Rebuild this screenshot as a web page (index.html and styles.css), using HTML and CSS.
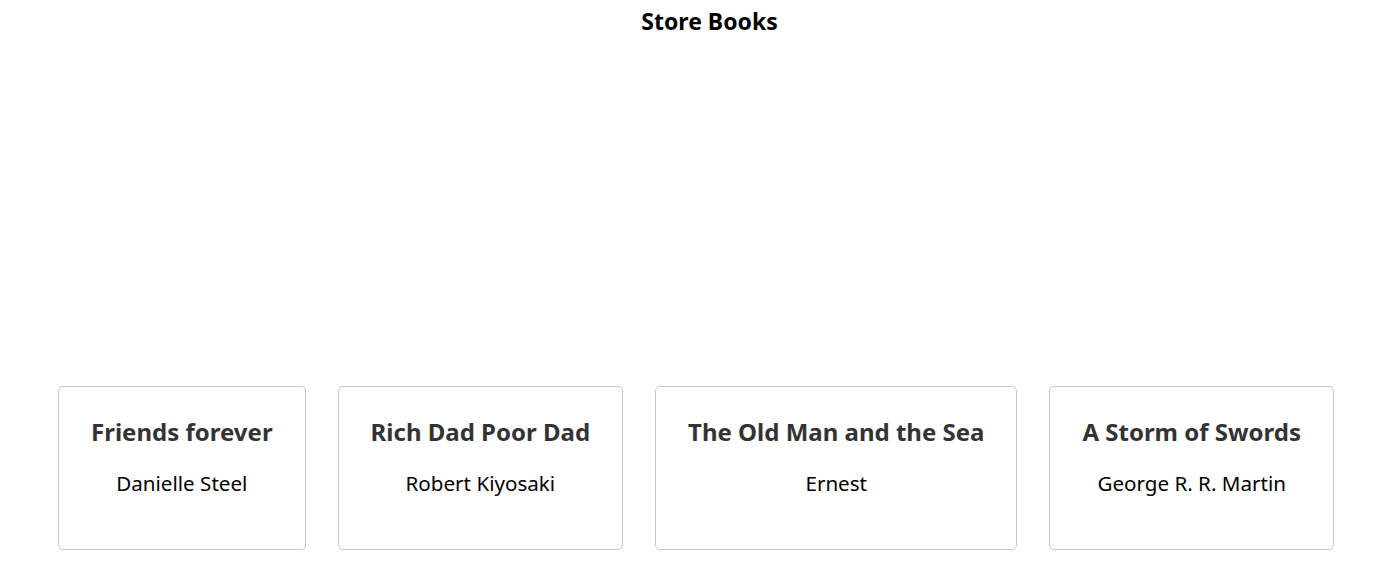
FILE: index.html
```html
<!DOCTYPE html>
<html>
<head>
<meta charset="utf-8">
<link rel="stylesheet" href="styles.css">
</head>
<body>
<h1 class="page-title">Store Books</h1>
<div class="book-list">
  <div class="book-card">
    <h2 class="book-title">Friends forever</h2>
    <p class="book-author">Danielle Steel</p>
  </div>
  <div class="book-card">
    <h2 class="book-title">Rich Dad Poor Dad</h2>
    <p class="book-author">Robert Kiyosaki</p>
  </div>
  <div class="book-card">
    <h2 class="book-title">The Old Man and the Sea</h2>
    <p class="book-author">Ernest</p>
  </div>
  <div class="book-card">
    <h2 class="book-title">A Storm of Swords</h2>
    <p class="book-author">George R. R. Martin</p>
  </div>
</div>
</body>
</html>
```
FILE: styles.css
```css
html, body {
  margin: 0;
  padding: 0;
  background: #fff;
}
body {
  font-family: "Noto Sans", "Open Sans", sans-serif;
}
.page-title {
  margin: 0;
  padding-top: 7px;
  padding-left: 19px;
  text-align: center;
  font-size: 23px;
  line-height: 28px;
  font-weight: 700;
  color: #000;
}
.book-list {
  display: flex;
  align-items: flex-start;
  gap: 32px;
  padding-left: 58px;
  margin-top: 351px;
}
.book-card {
  box-sizing: border-box;
  height: 164px;
  padding: 29px 32px 0;
  border: 1px solid #c6c6c6;
  border-radius: 5px;
  text-align: center;
}
.book-title {
  margin: 0;
  font-size: 24px;
  line-height: 32px;
  font-weight: 700;
  color: #333;
  white-space: nowrap;
}
.book-author {
  margin: 21px 0 0;
  font-size: 20.6px;
  line-height: 28px;
  color: #000;
  white-space: nowrap;
}
```
